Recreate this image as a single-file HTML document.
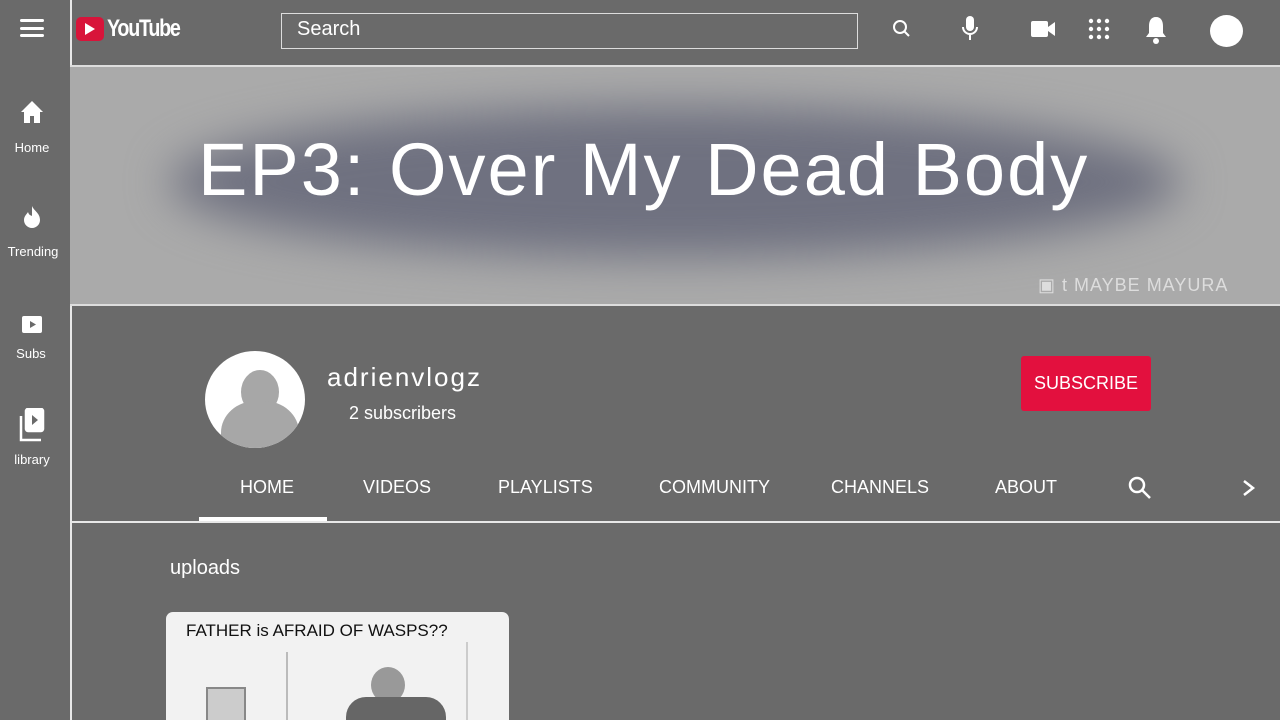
<!DOCTYPE html>
<html><head><style>
*{margin:0;padding:0;box-sizing:border-box}
html,body{width:1280px;height:720px;overflow:hidden}
body{background:#6a6a6a;font-family:"Liberation Sans",sans-serif;color:#fff;position:relative}
.a{position:absolute}
.side{left:70px;top:0;width:2px;height:720px;background:#e8e8e8}
.lbl{font-size:13px;width:70px;text-align:center;left:0}
.tab{top:477px;font-size:18px}
</style></head><body>
<div class="a side"></div>
<div class="a" style="left:20px;top:19px;width:24px;height:3px;background:#fff;border-radius:2px"></div>
<div class="a" style="left:20px;top:27px;width:24px;height:3px;background:#fff;border-radius:2px"></div>
<div class="a" style="left:20px;top:34px;width:24px;height:3px;background:#fff;border-radius:2px"></div>
<div class="a" style="left:76px;top:17px;width:28px;height:24px;background:#d8143a;border-radius:5px"></div>
<svg class="a" style="left:84px;top:23px" width="12" height="12"><polygon points="1,0 11,6 1,12" fill="#fff"/></svg>
<div class="a" style="left:107px;top:15px;font-size:24px;font-weight:bold;letter-spacing:-1.5px;transform:scaleX(.82);transform-origin:left">YouTube</div>
<div class="a" style="left:281px;top:13px;width:577px;height:36px;border:1.5px solid #ddd"></div>
<div class="a" style="left:297px;top:18px;font-size:20px">Search</div>
<svg class="a" style="left:892px;top:19px" width="20" height="20"><circle cx="8" cy="8" r="6" stroke="#fff" stroke-width="2" fill="none"/><line x1="12" y1="12" x2="17" y2="17" stroke="#fff" stroke-width="2"/></svg>
<svg class="a" style="left:959px;top:14px" width="22" height="30"><rect x="7" y="2" width="8" height="15" rx="4" fill="#fff"/><path d="M4 13a7 7 0 0 0 14 0M11 20v6" stroke="#fff" stroke-width="2" fill="none"/></svg>
<svg class="a" style="left:1030px;top:19px" width="26" height="20"><rect x="1" y="2" width="17" height="16" rx="2" fill="#fff"/><polygon points="18,8 25,3 25,17 18,12" fill="#fff"/></svg>
<svg class="a" style="left:1088px;top:18px" width="22" height="22" fill="#fff"><circle cx="3" cy="3" r="2.2"/><circle cx="11" cy="3" r="2.2"/><circle cx="19" cy="3" r="2.2"/><circle cx="3" cy="11" r="2.2"/><circle cx="11" cy="11" r="2.2"/><circle cx="19" cy="11" r="2.2"/><circle cx="3" cy="19" r="2.2"/><circle cx="11" cy="19" r="2.2"/><circle cx="19" cy="19" r="2.2"/></svg>
<svg class="a" style="left:1144px;top:15px" width="24" height="30" fill="#fff"><path d="M12 2c-5 0-7 4-7 9v7l-3 4h20l-3-4v-7c0-5-2-9-7-9z"/><circle cx="12" cy="26" r="3"/></svg>
<div class="a" style="left:1210px;top:15px;width:33px;height:32px;border-radius:50%;background:#fff"></div>
<svg class="a" style="left:20px;top:100px" width="24" height="24" fill="#fff"><path d="M12 1L1 12h3v11h6v-7h4v7h6V12h3z"/></svg>
<div class="a lbl" style="top:140px;left:-3px">Home</div>
<svg class="a" style="left:22px;top:205px" width="20" height="24" fill="#fff"><path d="M10 1c2 5 8 7 8 14a8 8 0 0 1-16 0c0-4 3-6 4-8 1 3 2 3 4 4z"/></svg>
<div class="a lbl" style="top:244px;left:-2px">Trending</div>
<svg class="a" style="left:22px;top:316px" width="20" height="17"><rect width="20" height="17" rx="2" fill="#fff"/><polygon points="8,5 14,8.5 8,12" fill="#6a6a6a"/></svg>
<div class="a lbl" style="top:346px;left:-4px">Subs</div>
<svg class="a" style="left:18px;top:408px" width="28" height="34" fill="none" stroke="#fff" stroke-width="2.5"><rect x="8" y="1" width="17" height="22" rx="2" fill="#fff"/><path d="M3 8v24h20"/><polygon points="14,7 20,12 14,17" fill="#6a6a6a" stroke="none"/></svg>
<div class="a lbl" style="top:452px;left:-3px">library</div>
<div class="a" style="left:70px;top:65px;width:1210px;height:241px;background:#aaaaaa;border-top:2px solid #ddd;border-bottom:2px solid #ddd;overflow:hidden">
<div class="a" style="left:100px;top:40px;width:1010px;height:150px;border-radius:50%;background:#6f7180;filter:blur(22px)"></div>
<div class="a" style="left:128px;top:60px;font-size:74px;letter-spacing:2px;white-space:nowrap">EP3: Over My Dead Body</div>
<div class="a" style="left:968px;top:208px;font-size:18px;color:#ddd;letter-spacing:1px">▣ t MAYBE MAYURA</div>
</div>
<div class="a" style="left:205px;top:351px;width:100px;height:97px;border-radius:50%;background:#fff;overflow:hidden">
<div class="a" style="left:36px;top:19px;width:38px;height:44px;border-radius:50%;background:#a7a7a7"></div>
<div class="a" style="left:16px;top:50px;width:78px;height:70px;border-radius:45% 45% 0 0;background:#a7a7a7"></div>
</div>
<div class="a" style="left:327px;top:362px;font-size:26px;letter-spacing:2px">adrienvlogz</div>
<div class="a" style="left:349px;top:403px;font-size:18px">2 subscribers</div>
<div class="a" style="left:1021px;top:356px;width:130px;height:55px;background:#e3103e;border-radius:3px;font-size:18px;text-align:center;line-height:55px">SUBSCRIBE</div>
<div class="a tab" style="left:240px">HOME</div>
<div class="a tab" style="left:363px">VIDEOS</div>
<div class="a tab" style="left:498px">PLAYLISTS</div>
<div class="a tab" style="left:659px">COMMUNITY</div>
<div class="a tab" style="left:831px">CHANNELS</div>
<div class="a tab" style="left:995px">ABOUT</div>
<svg class="a" style="left:1127px;top:475px" width="26" height="26"><circle cx="10" cy="10" r="7" stroke="#fff" stroke-width="2.5" fill="none"/><line x1="15" y1="15" x2="23" y2="23" stroke="#fff" stroke-width="2.5"/></svg>
<svg class="a" style="left:1242px;top:479px" width="14" height="18"><path d="M2 2l9 7-9 7" stroke="#fff" stroke-width="2.5" fill="none"/></svg>
<div class="a" style="left:199px;top:517px;width:128px;height:4px;background:#fff"></div>
<div class="a" style="left:70px;top:521px;width:1210px;height:2px;background:#e8e8e8"></div>
<div class="a" style="left:170px;top:557px;font-size:20px">uploads</div>
<div class="a" style="left:166px;top:612px;width:343px;height:108px;background:#f2f2f2;border-radius:7px 7px 0 0;overflow:hidden">
<div class="a" style="left:20px;top:9px;font-size:17px;color:#111;white-space:nowrap">FATHER is AFRAID OF WASPS??</div>
<div class="a" style="left:205px;top:55px;width:34px;height:36px;border-radius:50%;background:#999"></div>
<div class="a" style="left:180px;top:85px;width:100px;height:40px;border-radius:20px 20px 0 0;background:#666"></div>
<div class="a" style="left:40px;top:75px;width:40px;height:50px;background:#ccc;border:2px solid #888"></div>
<div class="a" style="left:120px;top:40px;width:2px;height:80px;background:#bbb"></div>
<div class="a" style="left:300px;top:30px;width:2px;height:90px;background:#ccc"></div>
</div>
</body></html>
